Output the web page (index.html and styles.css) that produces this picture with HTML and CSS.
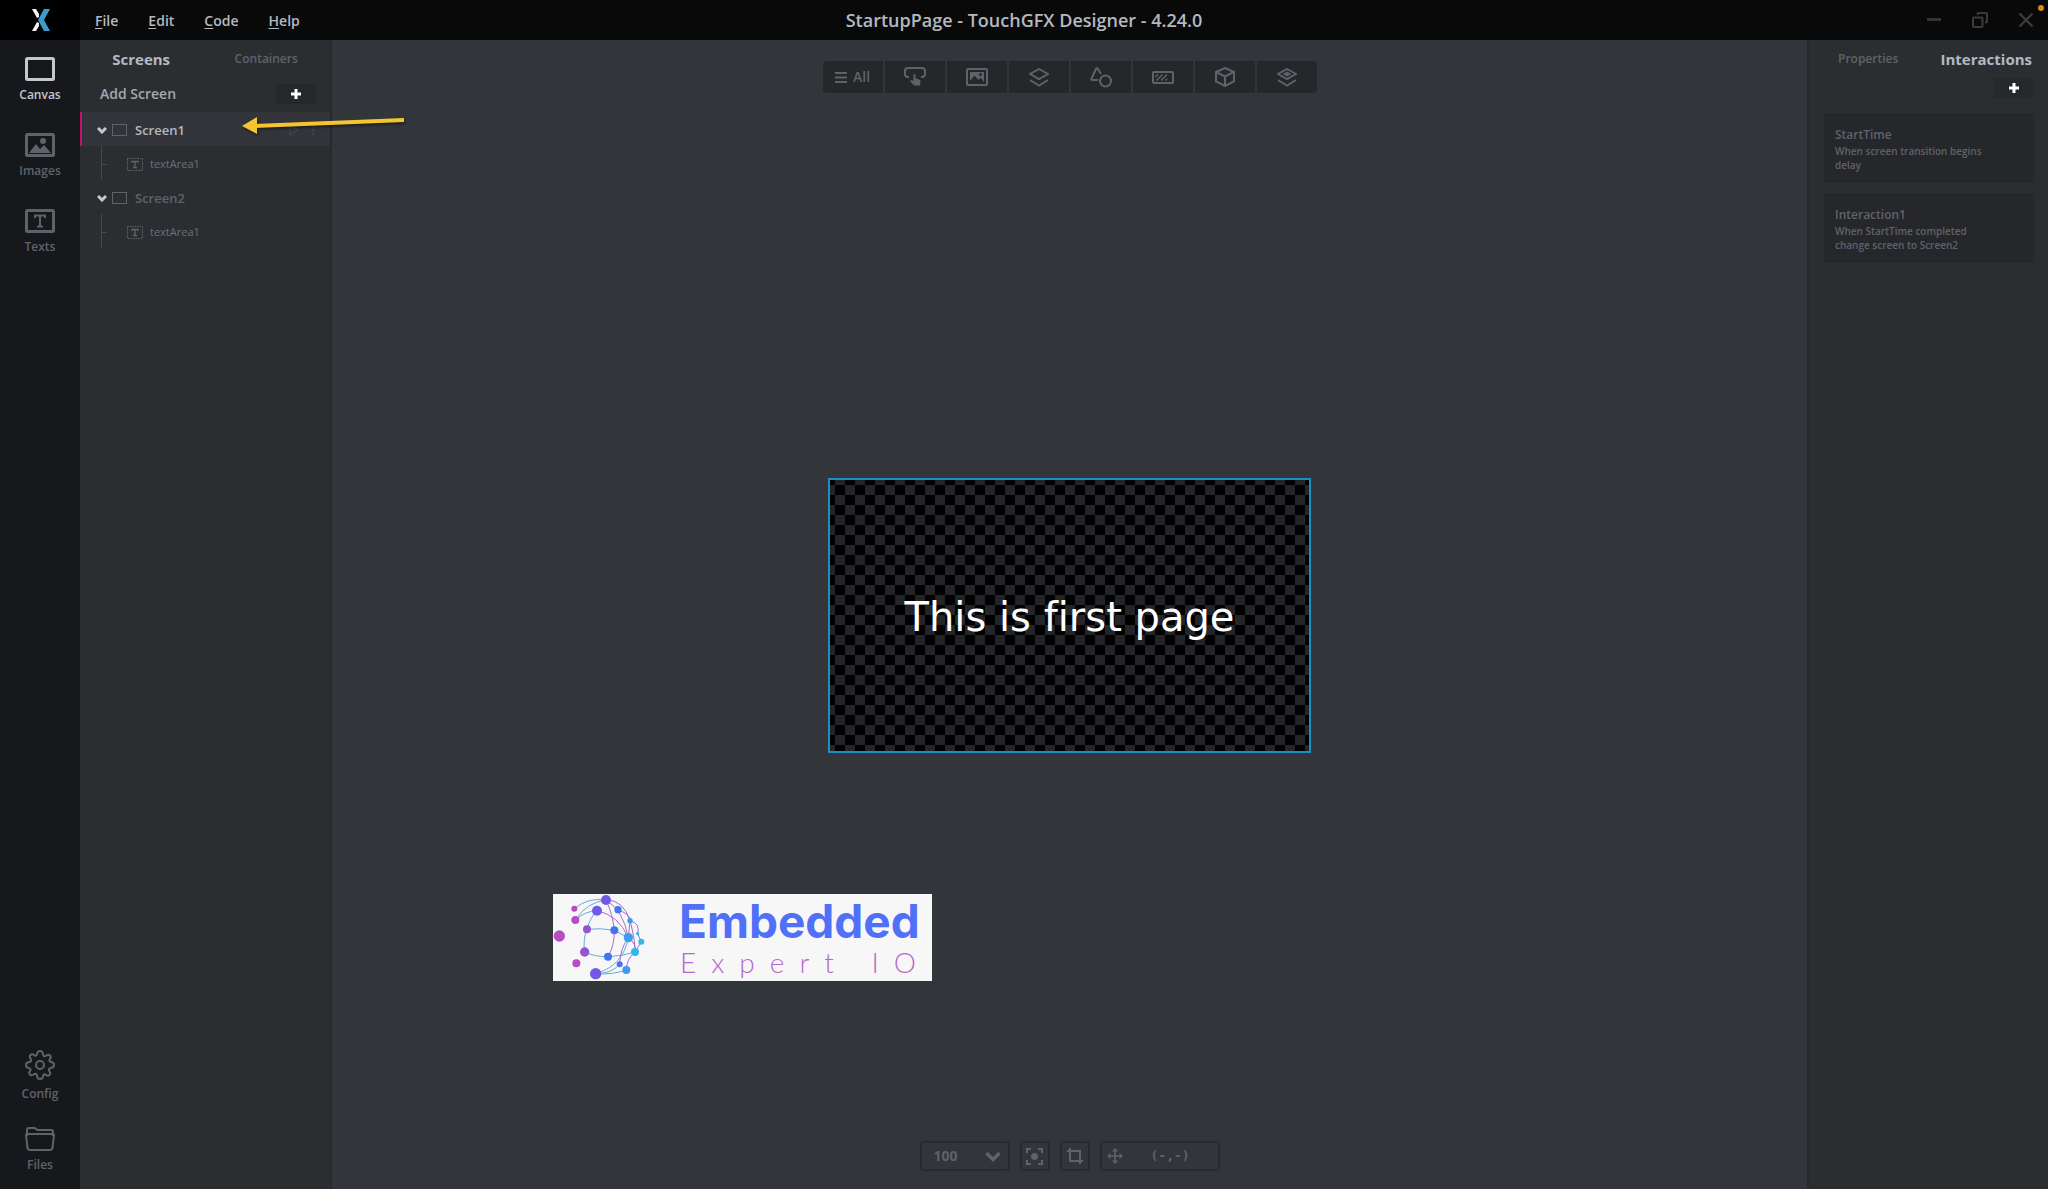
FILE: index.html
```html
<!DOCTYPE html>
<html lang="en">
<head>
<meta charset="utf-8">
<title>StartupPage - TouchGFX Designer - 4.24.0</title>
<link rel="stylesheet" href="styles.css">
</head>
<body>
<div class="app">
  <header class="titlebar">
    <div class="titlebar-start">
      <div class="brand">
        <svg width="18" height="22" viewBox="0 0 18 22" aria-hidden="true">
          <path d="M0 0H4L7 5V8L5 9ZM0 22H4L7 17V14L5 13Z" fill="#f4f4f4"/>
          <path d="M12 0H18L12 11L18 22H12L6 11Z" fill="#3b9cc9"/>
        </svg>
      </div>
      <nav class="menu">
        <button><u>F</u>ile</button>
        <button><u>E</u>dit</button>
        <button><u>C</u>ode</button>
        <button><u>H</u>elp</button>
      </nav>
    </div>
    <h1 class="window-title">StartupPage - TouchGFX Designer - 4.24.0</h1>
    <div class="window-controls">
      <button aria-label="Minimize"><svg width="16" height="16" viewBox="0 0 16 16"><path d="M1 7.500H15" stroke-width="2.600"/></svg></button>
      <button aria-label="Restore"><svg width="16" height="16" viewBox="0 0 16 16"><rect x="1" y="5.500" width="9.500" height="9.500" rx="1"/><path d="M5.500 3V2Q5.500 1 6.500 1H14Q15 1 15 2V9.500Q15 10.500 14 10.500H13"/></svg></button>
      <button aria-label="Close"><svg width="16" height="16" viewBox="0 0 16 16"><path d="M1.500 1.500L14.500 14.500M14.500 1.500L1.500 14.500" stroke-width="2.400"/></svg></button>
      <span class="notice-dot"></span>
    </div>
  </header>

  <div class="workspace">
    <nav class="rail">
      <div class="rail-group">
        <button class="rail-item active">
          <svg width="30" height="24" viewBox="0 0 30 24"><rect x="1.500" y="1.500" width="27" height="21" rx="1"/></svg>
          <span>Canvas</span>
        </button>
        <button class="rail-item">
          <svg width="30" height="24" viewBox="0 0 30 24"><rect x="1.500" y="1.500" width="27" height="21" rx="1"/><path d="M4 20L11 11L15 16L19 12L26 20Z" fill="currentColor" stroke="none"/><circle cx="18" cy="8" r="3" fill="currentColor" stroke="none"/></svg>
          <span>Images</span>
        </button>
        <button class="rail-item">
          <svg width="30" height="24" viewBox="0 0 30 24"><rect x="1.500" y="1.500" width="27" height="21" rx="1"/><path d="M10 9V6.500H20V9M15 6.500V17.500M12 17.500H18" stroke-width="2"/></svg>
          <span>Texts</span>
        </button>
      </div>
      <div class="rail-group tools">
        <button class="rail-item">
          <svg width="30" height="30" viewBox="0 0 30 30" stroke-width="2"><path d="M12 4Q12.500 1 15 1T18 4Q18 5.500 19 6T21.500 5.500Q23.500 4 25 5.500T25 9Q24 10 24.500 11T26.500 12Q29 12.500 29 15T26 18Q24.500 18 24 19T24.500 21.500Q26 23.500 24.500 25T21 25Q20 24 19 24.500T18 26.500Q17.500 29 15 29T12 26Q12 24.500 11 24T8.500 24.500Q6.500 26 5 24.500T5 21Q6 20 5.500 19T3.500 18Q1 17.500 1 15T4 12Q5.500 12 6 11T5.500 8.500Q4 6.500 5.500 5T9 5Q10 6 11 5.500T12 4Z"/><circle cx="15" cy="15" r="4"/></svg>
          <span>Config</span>
        </button>
        <button class="rail-item">
          <svg width="30" height="24" viewBox="0 0 30 24" stroke-width="2"><path d="M2 9V3Q2 1 4 1H9Q10 1 11 2T13 3H26Q28 3 28 5V9M2 7H28Q29 7 29 8L27.500 21Q27 23 25 23H5Q3 23 2.500 21L1 8Q1 7 2 7Z"/></svg>
          <span>Files</span>
        </button>
      </div>
    </nav>

    <aside class="panel screens">
      <div class="tabs">
        <button class="tab selected">Screens</button>
        <button class="tab">Containers</button>
      </div>
      <div class="add-row">
        <span>Add Screen</span>
        <button class="add" aria-label="Add screen"><svg width="10" height="10" viewBox="0 0 10 10"><path d="M5 0V10M0 5H10"/></svg></button>
      </div>
      <ul class="tree">
        <li>
          <div class="screen-row current">
            <svg class="chevron" width="10" height="7" viewBox="0 0 10 7"><path d="M1 1L5 5L9 1"/></svg>
            <svg class="frame" width="15" height="12" viewBox="0 0 15 12"><rect x="0.500" y="0.500" width="14" height="11"/></svg>
            <span>Screen1</span>
            <svg class="row-actions" width="28" height="12" viewBox="0 0 28 12"><path d="M2 1L10 6L2 11Z" fill="none" stroke="currentColor" stroke-width="1.500"/><circle cx="25" cy="2" r="1.500"/><circle cx="25" cy="6" r="1.500"/><circle cx="25" cy="10" r="1.500"/></svg>
          </div>
          <div class="widget-row">
            <svg width="16" height="13" viewBox="0 0 16 13"><rect x="0.500" y="0.500" width="15" height="12" stroke-dasharray="1.500 1"/><path d="M5 5V3.500H11V5M8 3.500V9.500M6 9.500H10" stroke-width="1.300"/></svg>
            <span>textArea1</span>
          </div>
        </li>
        <li>
          <div class="screen-row">
            <svg class="chevron" width="10" height="7" viewBox="0 0 10 7"><path d="M1 1L5 5L9 1"/></svg>
            <svg class="frame" width="15" height="12" viewBox="0 0 15 12"><rect x="0.500" y="0.500" width="14" height="11"/></svg>
            <span>Screen2</span>
          </div>
          <div class="widget-row">
            <svg width="16" height="13" viewBox="0 0 16 13"><rect x="0.500" y="0.500" width="15" height="12" stroke-dasharray="1.500 1"/><path d="M5 5V3.500H11V5M8 3.500V9.500M6 9.500H10" stroke-width="1.300"/></svg>
            <span>textArea1</span>
          </div>
        </li>
      </ul>
    </aside>

    <main class="canvas">
      <div class="widget-bar">
        <button><svg width="12" height="11" viewBox="0 0 12 11"><path d="M0 1H12M0 5.500H12M0 10H12"/></svg>All</button>
        <button aria-label="Buttons"><svg width="22" height="20" viewBox="0 0 22 20"><path d="M5 10H4Q1 10 1 7V4Q1 1 4 1H18Q21 1 21 4V7Q21 10 18 10H17"/><path d="M9.500 8Q9.500 7 10.500 7T11.500 8V11.500L15 12.500Q16.500 13 16.500 14.500L16 18.500H10L6 14Q7 12.500 9.500 14Z" fill="currentColor" stroke="none"/></svg></button>
        <button aria-label="Images"><svg width="22" height="18" viewBox="0 0 22 18"><rect x="1" y="1" width="20" height="16" rx="1"/><path fill-rule="evenodd" d="M4 4H18V14L14.500 9.500L12.500 12L8.500 7.500L4 13ZM14.500 5A1.500 1.500 0 1 0 14.500 8A1.500 1.500 0 1 0 14.500 5Z" fill="currentColor" stroke="none"/></svg></button>
        <button aria-label="Containers"><svg width="20" height="19" viewBox="0 0 20 19"><path d="M10 1L19 6L10 11L1 6ZM1 12L10 17.500L19 12"/></svg></button>
        <button aria-label="Shapes"><svg width="22" height="21" viewBox="0 0 22 21"><path d="M8 13H2.500Q1 13 1.500 11.500L6 2Q7 0 8 2L11 7"/><circle cx="15.500" cy="14" r="5.500"/></svg></button>
        <button aria-label="Progress indicators"><svg width="22" height="13" viewBox="0 0 22 13"><rect x="1" y="1" width="20" height="11" rx="1"/><path d="M3.500 6L6 3.500M4.500 9.500L10.500 3.500M9 9.500L15 3.500M13.500 9.500L15 8" stroke-width="1.500"/></svg></button>
        <button aria-label="3D widgets"><svg width="20" height="20" viewBox="0 0 20 20"><path d="M10 1L19 5V14.500L10 19L1 14.500V5ZM1 5L10 9.500L19 5M10 9.500V19"/></svg></button>
        <button aria-label="Miscellaneous"><svg width="20" height="19" viewBox="0 0 20 19"><path d="M10 1L19 6L10 11L1 6ZM1 12L10 17.500L19 12"/><path d="M10 3.500L14.500 6L10 8.500L5.500 6Z" fill="currentColor" stroke="none"/></svg></button>
      </div>

      <div class="stage"><div class="device-screen">This is first page</div></div>

      <div class="view-bar">
        <label class="zoom">
          <select aria-label="Zoom level"><option>100</option></select>
          <svg width="16" height="11" viewBox="0 0 16 11"><path d="M1.500 2L8 8.500L14.500 2" stroke-width="3.500"/></svg>
        </label>
        <button aria-label="Center"><svg width="17" height="17" viewBox="0 0 17 17"><path d="M1 5V1H5M12 1H16V5M16 12V16H12M5 16H1V12"/><circle cx="8.500" cy="8.500" r="3.500" fill="currentColor" stroke="none"/></svg></button>
        <button aria-label="Crop"><svg width="16" height="16" viewBox="0 0 16 16"><path d="M3 0V13H16M0 3H13V16"/></svg></button>
        <div class="position">
          <svg width="16" height="16" viewBox="0 0 16 16"><path d="M8 2V14M2 8H14" stroke-width="1.600"/><path d="M8 0L11 3.500H5ZM8 16L5 12.500H11ZM0 8L3.500 5V11ZM16 8L12.500 11V5Z" fill="currentColor" stroke="none"/></svg>
          <output>(-,-)</output>
        </div>
      </div>

      <div class="watermark">
        <svg width="100" height="87" viewBox="39 41 300 261" aria-hidden="true">
          <g fill="none" stroke="#65a9dd" stroke-width="3">
            <path d="M103 85Q145 50 198 59M106 119Q140 66 198 59M106 119Q135 92 171 91M171 91Q150 112 141 147M141 147Q128 180 134 215M141 147Q180 142 223 150L265 172M134 215Q165 230 204 229Q245 228 285 215M167 280Q215 280 239 252M167 280Q215 284 259 269M167 280Q250 256 265 172"/>
          </g>
          <g fill="none" stroke="#a66dcc" stroke-width="3">
            <path d="M198 59Q218 100 223 150Q224 195 204 229M198 59Q250 90 265 172M171 91Q236 105 265 172M198 59Q250 58 270 121L265 172M234 88Q275 105 270 121Q302 130 293 160L304 184L285 215Q260 235 259 269M265 172Q290 190 285 215M265 172Q240 205 239 252M270 121Q286 180 285 215"/>
          </g>
          <g fill="#b84bc6"><circle cx="103" cy="85" r="9"/><circle cx="106" cy="119" r="12"/><circle cx="58" cy="167" r="17"/><circle cx="109" cy="249" r="12"/></g>
          <g fill="#9354d2"><circle cx="141" cy="147" r="12"/><circle cx="134" cy="215" r="14"/></g>
          <g fill="#7159e3"><circle cx="198" cy="59" r="15"/><circle cx="171" cy="91" r="15"/><circle cx="167" cy="280" r="17"/></g>
          <g fill="#4774ec"><circle cx="234" cy="88" r="11"/><circle cx="223" cy="150" r="12"/><circle cx="204" cy="229" r="12"/><circle cx="239" cy="252" r="9"/></g>
          <g fill="#3d9cf0"><circle cx="270" cy="121" r="8"/><circle cx="265" cy="172" r="14"/><circle cx="259" cy="269" r="12"/></g>
          <g fill="#32b7ec"><circle cx="293" cy="160" r="5"/><circle cx="304" cy="184" r="9"/><circle cx="285" cy="215" r="12"/></g>
        </svg>
        <div class="wordmark">
          <span class="wordmark-name">Embedded</span>
          <span class="wordmark-sub">Expert IO</span>
        </div>
      </div>
    </main>

    <aside class="panel interactions">
      <div class="tabs">
        <button class="tab">Properties</button>
        <button class="tab selected">Interactions</button>
      </div>
      <button class="add" aria-label="Add interaction"><svg width="10" height="10" viewBox="0 0 10 10"><path d="M5 0V10M0 5H10"/></svg></button>
      <article class="card">
        <h2>StartTime</h2>
        <p>When screen transition begins<br>delay</p>
      </article>
      <article class="card">
        <h2>Interaction1</h2>
        <p>When StartTime completed<br>change screen to Screen2</p>
      </article>
    </aside>

    <svg class="pointer-arrow" width="166" height="24" viewBox="0 0 166 24" aria-hidden="true">
      <path d="M12 10L162 4" stroke="#f5c431" stroke-width="4"/>
      <path d="M0 10L15 1V18Z" fill="#f5c431"/>
    </svg>
  </div>
</div>
</body>
</html>
```
FILE: styles.css
```css
* { box-sizing: border-box; }

body {
  margin: 0;
  background: #323539;
  color: #5f6369;
  font: 600 13px/18px "Open Sans", "Noto Sans", sans-serif;
}

button, select {
  margin: 0;
  padding: 0;
  border: 0;
  background: none;
  color: inherit;
  font: inherit;
}

svg { display: block; flex: none; }

button svg, .position svg, .zoom svg, .widget-row svg, .frame, .chevron {
  fill: none;
  stroke: currentColor;
}

.app { display: flex; flex-direction: column; min-height: 100vh; }

/* Title bar */
.titlebar {
  display: grid;
  grid-template-columns: 1fr auto 1fr;
  align-items: center;
  height: 40px;
  background: #090909;
  color: #b4b9c1;
}
.titlebar-start { display: flex; height: 100%; }
.brand { display: grid; place-items: center; width: 80px; background: #000; padding-left: 2px; }
.menu { display: flex; gap: 30px; padding: 2px 0 0 15px; font-size: 14px; }
.menu u { text-underline-offset: 2px; }
.window-title { margin: 0; font-size: 18px; font-weight: 600; line-height: 24px; }
.window-controls {
  position: relative;
  display: flex;
  justify-content: flex-end;
  gap: 30px;
  padding-right: 14px;
  color: #3a3b3d;
}
.window-controls svg { stroke-width: 2; }
.notice-dot {
  position: absolute;
  top: -7px;
  right: 4px;
  width: 6px;
  height: 6px;
  border-radius: 50%;
  background: #dd8418;
}

/* Body columns */
.workspace {
  position: relative;
  flex: 1;
  display: grid;
  grid-template-columns: 80px 252px 1fr 241px;
}

.rail {
  display: flex;
  flex-direction: column;
  justify-content: space-between;
  padding: 17px 0 15px;
  background: #17181b;
}
.rail-group { display: flex; flex-direction: column; gap: 29px; }
.rail-group.tools { gap: 24px; }
.rail-item {
  display: flex;
  flex-direction: column;
  align-items: center;
  gap: 5px;
  font-size: 12px;
}
.rail-item svg { stroke-width: 3; }
.rail-item svg[stroke-width] { stroke-width: 2; }
.rail-item.active { color: #c3c7ce; }

/* Side panels */
.panel { background: #2b2e31; }
.screens { border-right: 2px solid #27292c; }
.tabs { display: flex; align-items: center; justify-content: space-around; height: 40px; padding-bottom: 2px; }
.tab { font-size: 12px; }
.tab.selected { color: #b4b9c4; font-size: 15px; font-weight: 700; }
.add {
  display: grid;
  place-items: center;
  width: 40px;
  height: 20px;
  border-radius: 3px;
  background: #26282b;
  color: #fff;
}
.add svg { stroke-width: 3; }
.add-row {
  display: flex;
  align-items: center;
  justify-content: space-between;
  height: 32px;
  padding: 0 14px 4px 20px;
  color: #a3a8b0;
  font-size: 14px;
}

.tree { margin: 0; padding: 0; list-style: none; }
.screen-row {
  display: flex;
  align-items: center;
  height: 34px;
  padding: 2px 14px 0 17px;
  font-size: 13px;
}
.screen-row span { margin-left: 8px; }
.current { padding-left: 15px; border-left: 2px solid #c50f72; background: #323439; }
.current span { color: #b4b9c1; }
.chevron { margin-right: 5px; color: #c3c7ce; stroke-width: 3; }
.row-actions { margin-left: auto; color: #3f4247; fill: currentColor; }
.widget-row {
  display: flex;
  align-items: center;
  gap: 7px;
  height: 34px;
  margin-left: 21px;
  padding: 2px 0 0 25px;
  border-left: 1px solid #46494e;
  background: linear-gradient(#46494e, #46494e) 0 18px / 5px 1px no-repeat;
  font-size: 11px;
  font-weight: 400;
}
.widget-row span { color: #6c7077; }

/* Canvas */
.canvas {
  position: relative;
  display: flex;
  flex-direction: column;
  align-items: center;
  padding: 21px 0 18px;
}
.widget-bar {
  display: flex;
  gap: 2px;
  height: 32px;
  border-radius: 4px;
  overflow: hidden;
}
.widget-bar button {
  display: flex;
  align-items: center;
  justify-content: center;
  gap: 6px;
  width: 60px;
  background: #26272a;
  font-size: 14px;
}
.widget-bar svg { stroke-width: 2; }
.stage { flex: 1; display: grid; place-items: center; padding-bottom: 4px; }
.device-screen {
  display: grid;
  place-items: center;
  width: 483px;
  height: 275px;
  padding-top: 4px;
  border: 2px solid #1b8fc0;
  background: conic-gradient(#242528 25%, #000 0 50%, #242528 0 75%, #000 0) 5px 5px / 20px 20px;
  color: #fff;
  font: 40px/48px "DejaVu Sans", Verdana, sans-serif;
  font-variant-ligatures: none;
}
.view-bar { display: flex; gap: 10px; height: 30px; }
.view-bar > * {
  display: flex;
  align-items: center;
  justify-content: center;
  width: 30px;
  border: 2px solid #282a2e;
  border-radius: 3px;
}
.view-bar svg { stroke-width: 2; }
.view-bar .zoom { position: relative; width: 90px; }
.zoom select { appearance: none; width: 100%; height: 100%; padding-left: 12px; font-size: 14px; font-weight: 700; }
.zoom svg { position: absolute; right: 7px; pointer-events: none; }
.view-bar .position {
  justify-content: flex-start;
  gap: 28px;
  width: 120px;
  padding-left: 5px;
  font: 700 13px/18px "DejaVu Sans Mono", monospace;
}

.watermark {
  position: absolute;
  left: 221px;
  top: 854px;
  display: flex;
  width: 379px;
  height: 87px;
  background: #f7f7f8;
}
.wordmark { display: flex; flex-direction: column; padding-left: 26px; }
.wordmark-name { color: #5070f8; font: 700 46px/54px Inter, sans-serif; }
.wordmark-sub { padding-left: 1px; color: #b867cc; font: 300 28px/28px Lato, sans-serif; letter-spacing: 15px; white-space: nowrap; }

/* Interactions */
.interactions { padding: 0 14px 0 15px; border-left: 2px solid #27292c; }
.interactions .tabs { justify-content: space-between; padding-left: 14px; margin-right: 2px; }
.interactions .add { margin: -2px 0 15px auto; }
.card { margin-bottom: 10px; padding: 13px 11px 11px; border-radius: 3px; background: #26272a; }
.card h2 { margin: 0; font-size: 12px; font-weight: 600; line-height: 18px; }
.card p { margin: 0; font-size: 10px; line-height: 14px; }

.pointer-arrow {
  position: absolute;
  left: 242px;
  top: 76px;
  filter: drop-shadow(1px 2px 1px #0006);
}
```
